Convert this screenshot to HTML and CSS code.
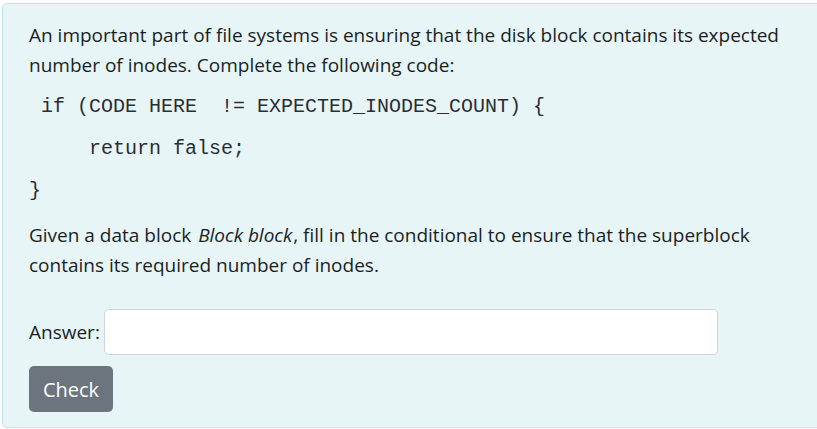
FILE: index.html
```html
<!DOCTYPE html>
<html>
<head>
<meta charset="utf-8">
<link rel="stylesheet" href="styles.css">
</head>
<body>
<div class="card">
  <p class="text intro">An important part of file systems is ensuring that the disk block contains its expected number of inodes. Complete the following code:</p>
<pre class="code"> if (CODE HERE  != EXPECTED_INODES_COUNT) {
     return false;
}</pre>
  <p class="text given">Given a data block <em class="var">Block block</em>, fill in the conditional to ensure that the superblock contains its required number of inodes.</p>
  <div class="answer-row">
    <label class="label" for="ans">Answer:</label>
    <input class="answer" id="ans" type="text">
  </div>
  <button class="check" type="button">Check</button>
</div>
</body>
</html>
```
FILE: styles.css
```css
html, body {
  margin: 0;
  padding: 0;
  overflow: hidden;
  background: #ffffff;
}
body {
  padding: 3px 0 0 2px;
  font-family: "Open Sans", "Noto Sans", sans-serif;
  color: #1b1f24;
}
.card {
  width: 840px;
  box-sizing: border-box;
  background: #e7f5f7;
  border: 1px solid #bfe3ea;
  border-radius: 5px;
  padding: 16px 26px 15px 26px;
  display: flex;
  flex-direction: column;
  align-items: flex-start;
}
.text {
  margin: 0;
  font-size: 19px;
  line-height: 30px;
  width: 770px;
}
.var {
  font-style: italic;
  padding: 0 1px 0 2px;
}
.code {
  margin: 6px 0 8px 0;
  font-family: "Liberation Mono", "Courier New", monospace;
  font-size: 20px;
  line-height: 42px;
  color: #2a2e33;
}
.answer-row {
  margin-top: 29px;
  display: flex;
  align-items: center;
  gap: 4px;
}
.label {
  font-size: 19px;
}
.answer {
  width: 614px;
  height: 46px;
  box-sizing: border-box;
  border: 1px solid #ced4da;
  border-radius: 5px;
  background: #fff;
  margin: 0;
}
.check {
  margin-top: 11px;
  width: 84px;
  height: 46px;
  background: #6c757d;
  color: #fff;
  border: none;
  border-radius: 5px;
  font-family: "Open Sans", "Noto Sans", sans-serif;
  font-size: 20px;
  padding: 0;
}
```
